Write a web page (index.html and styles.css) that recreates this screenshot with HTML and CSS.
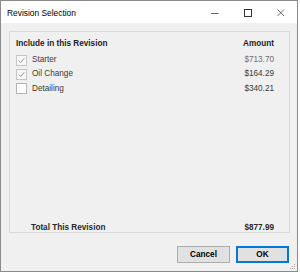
FILE: index.html
```html
<!DOCTYPE html>
<html lang="en">
<head>
    <meta charset="UTF-8">
    <title>Revision Selection</title>
    <link rel="stylesheet" href="styles.css">
</head>
<body>
    <div class="window">
        <div class="titlebar">
            <span class="title">Revision Selection</span>
            <div class="caption">
                <span class="cap">
                    <svg width="8" height="8" viewBox="0 0 8 8"><path d="M0 4.5H7.5" stroke="#666" stroke-width="1"/></svg>
                </span>
                <span class="cap">
                    <svg width="8" height="8" viewBox="0 0 8 8"><rect x="0.5" y="0.5" width="7" height="7" fill="none" stroke="#333" stroke-width="1"/></svg>
                </span>
                <span class="cap">
                    <svg width="8" height="8" viewBox="0 0 8 8"><path d="M0.5 0.5L7 7M7 0.5L0.5 7" stroke="#444" stroke-width="0.8"/></svg>
                </span>
            </div>
        </div>
        <div class="client">
            <div class="group">
                <div class="row head">
                    <span>Include in this Revision</span>
                    <span>Amount</span>
                </div>
                <ul class="items">
                    <li class="row item locked">
                        <span class="check on"><svg width="9" height="9" viewBox="0 0 9 9"><path d="M1.8 4.6L3.7 6.5L7.3 2.2" fill="none" stroke="#9a9a9a" stroke-width="1"/></svg></span>
                        <span class="label">Starter</span>
                        <span class="amount">$713.70</span>
                    </li>
                    <li class="row item">
                        <span class="check on"><svg width="9" height="9" viewBox="0 0 9 9"><path d="M1.8 4.6L3.7 6.5L7.3 2.2" fill="none" stroke="#9a9a9a" stroke-width="1"/></svg></span>
                        <span class="label">Oil Change</span>
                        <span class="amount">$164.29</span>
                    </li>
                    <li class="row item">
                        <span class="check"></span>
                        <span class="label">Detailing</span>
                        <span class="amount">$340.21</span>
                    </li>
                </ul>
                <div class="row total">
                    <span>Total This Revision</span>
                    <span>$877.99</span>
                </div>
            </div>
            <div class="actions">
                <button class="btn">Cancel</button>
                <button class="btn default">OK</button>
            </div>
        </div>
        <svg class="grip" width="7" height="7" viewBox="0 0 7 7">
            <rect x="5" y="1" width="1" height="1" fill="#a8a8a8"/>
            <rect x="3" y="3" width="1" height="1" fill="#a8a8a8"/>
            <rect x="5" y="3" width="1" height="1" fill="#a8a8a8"/>
            <rect x="1" y="5" width="1" height="1" fill="#a8a8a8"/>
            <rect x="3" y="5" width="1" height="1" fill="#a8a8a8"/>
            <rect x="5" y="5" width="1" height="1" fill="#a8a8a8"/>
        </svg>
    </div>
</body>
</html>
```

FILE: styles.css
```css
* {
    margin: 0;
    padding: 0;
    box-sizing: border-box;
}
body {
    background: #fff;
    font-family: 'Liberation Sans', Arial, sans-serif;
    font-size: 8.2px;
    color: #222;
}
.window {
    position: relative;
    width: 298px;
    height: 272px;
    border: 1px solid #8a8a8a;
    display: flex;
    flex-direction: column;
}
.titlebar {
    height: 22px;
    background: #fff;
    display: flex;
    align-items: center;
    padding-left: 6px;
    padding-top: 1px;
}
.title {
    flex: 1;
    font-size: 8.4px;
    color: #000;
}
.caption {
    display: flex;
    height: 100%;
}
.cap {
    width: 33px;
    display: flex;
    justify-content: center;
    align-items: center;
}
.client {
    flex: 1;
    background: #f0f0f0;
    display: flex;
    flex-direction: column;
    padding: 8px 7px 8px 8px;
}
.group {
    flex: 1;
    border: 1px solid #d9d9d9;
    display: flex;
    flex-direction: column;
    padding: 7px 15px 0 6px;
}
.row {
    display: flex;
    align-items: center;
    justify-content: space-between;
    line-height: 10px;
}
.head {
    font-weight: bold;
    color: #1e1e1e;
    margin-bottom: 3px;
}
.items {
    list-style: none;
    flex: 1;
    padding-top: 1px;
}
.item {
    height: 14.3px;
    color: #3a3a3a;
}
.item .label {
    flex: 1;
    margin-left: 5px;
}
.item.locked .amount {
    color: #6a6f78;
}
.check {
    width: 11px;
    height: 11px;
    border: 1px solid #b4b4b4;
    background: #fff;
    display: flex;
    justify-content: center;
    align-items: center;
}
.check.on {
    border-color: #c6c6c6;
    background: #f7f7f7;
}
.total {
    font-weight: bold;
    color: #2a2a2a;
    padding-left: 15px;
    height: 9px;
}
.actions {
    display: flex;
    justify-content: flex-end;
    gap: 6px;
    margin-top: 13px;
    padding-right: 1px;
}
.btn {
    width: 53px;
    height: 17px;
    font-family: inherit;
    font-size: 8.2px;
    font-weight: bold;
    color: #000;
    background: #e1e1e1;
    border: 1px solid #adadad;
}
.btn.default {
    border: 2px solid #0078d7;
}
.grip {
    position: absolute;
    right: 1px;
    bottom: 1px;
}
```
